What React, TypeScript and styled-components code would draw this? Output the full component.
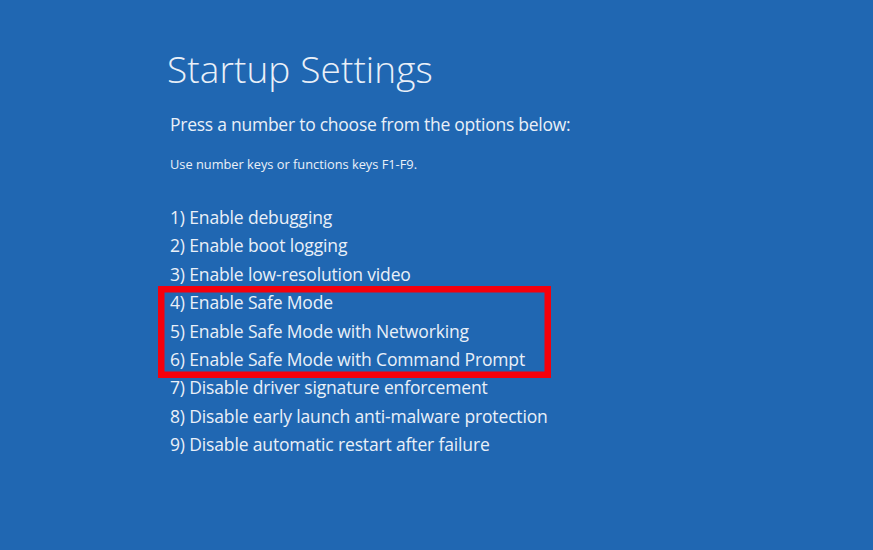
import styled, { createGlobalStyle } from 'styled-components';

const GlobalStyle = createGlobalStyle`
  html, body {
    margin: 0;
    padding: 0;
    background: #2067b2;
  }
`;

const Screen = styled.div`
  width: 873px;
  height: 550px;
  background: #2067b2;
  color: #eaf0f8;
  font-family: "Open Sans", "Noto Sans", sans-serif;
  padding: 44px 0 0 170px;
  box-sizing: border-box;
  overflow: hidden;
`;

const Title = styled.h1`
  margin: 0 0 0 -3px;
  font-size: 37px;
  font-weight: 300;
  line-height: 50px;
  letter-spacing: 0.1px;
`;

const Subtitle = styled.p`
  margin: 17px 0 0;
  font-size: 17.5px;
  font-weight: 400;
  line-height: 26px;
  letter-spacing: -0.25px;
`;

const Hint = styled.p`
  margin: 19px 0 0;
  font-size: 12.8px;
  line-height: 16px;
`;

const Options = styled.ol`
  list-style: none;
  margin: 31px 0 0;
  padding: 0;
`;

const Option = styled.li`
  font-size: 17.5px;
  line-height: 28.4px;
  letter-spacing: -0.15px;
  white-space: nowrap;
`;

// red marker drawn as an inset shadow so it takes no room in the list flow
const Highlight = styled.div`
  width: 393px;
  box-sizing: border-box;
  margin: -2px 0 -4.5px -12px;
  padding: 2px 0 4.5px 12px;
  box-shadow: inset 0 0 0 6.5px #f5000c;
`;

const before = ['1) Enable debugging', '2) Enable boot logging', '3) Enable low-resolution video'];
const marked = [
  '4) Enable Safe Mode',
  '5) Enable Safe Mode with Networking',
  '6) Enable Safe Mode with Command Prompt',
];
const after = [
  '7) Disable driver signature enforcement',
  '8) Disable early launch anti-malware protection',
  '9) Disable automatic restart after failure',
];

export default function App() {
  return (
    <>
      <GlobalStyle />
      <Screen>
        <Title>Startup Settings</Title>
        <Subtitle>Press a number to choose from the options below:</Subtitle>
        <Hint>Use number keys or functions keys F1-F9.</Hint>
        <Options>
          {before.map((o) => (
            <Option key={o}>{o}</Option>
          ))}
          <Highlight>
            {marked.map((o) => (
              <Option key={o}>{o}</Option>
            ))}
          </Highlight>
          {after.map((o) => (
            <Option key={o}>{o}</Option>
          ))}
        </Options>
      </Screen>
    </>
  );
}
